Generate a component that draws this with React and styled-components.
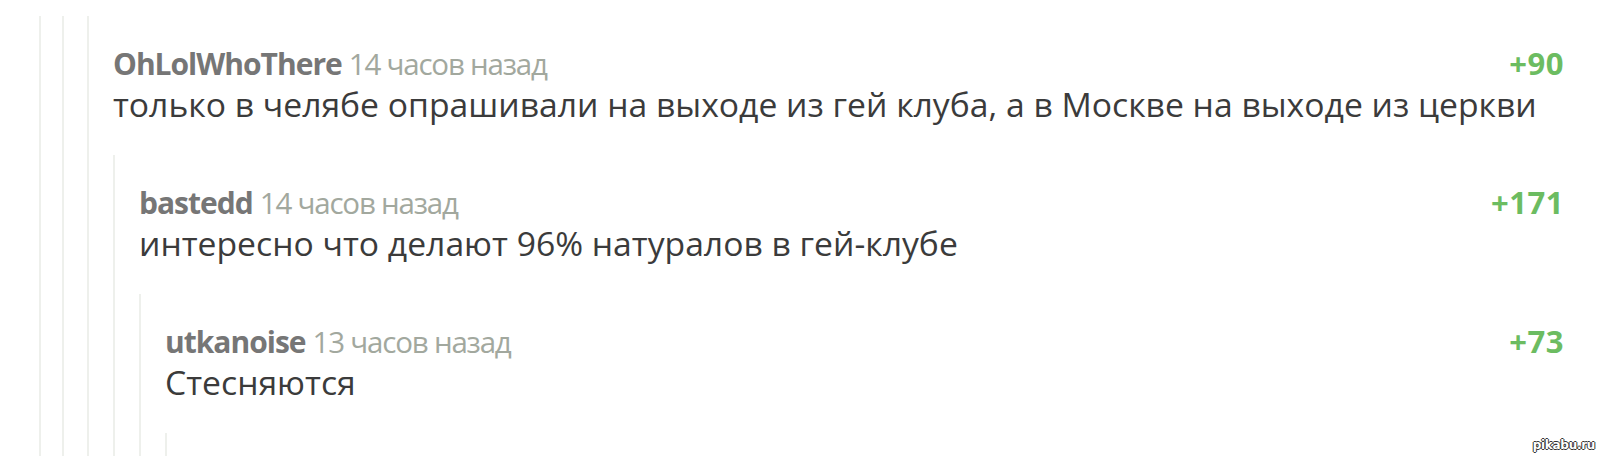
import React from "react";
import styled, { createGlobalStyle } from "styled-components";

const Global = createGlobalStyle`
  html, body {
    margin: 0;
    padding: 0;
    background: #ffffff;
  }
  body {
    font-family: "Open Sans", "Noto Sans", sans-serif;
    overflow: hidden;
  }
`;

const Page = styled.div`
  width: 1600px;
  height: 456px;
  overflow: hidden;
  box-sizing: border-box;
  padding: 0 36px 0 39px;
  position: relative;
`;

/* a vertical thread guide; parents above the viewport draw their lines full height */
const Thread = styled.div`
  border-left: 2px solid #eef0ec;
  padding-left: ${(p) => p.$indent}px;
  min-height: 456px;
  box-sizing: border-box;
`;

const Comment = styled.div`
  border-left: 2px solid #eef0ec;
  padding-left: 24px;
  padding-top: 27px;
  margin-top: ${(p) => p.$top}px;
  min-height: ${(p) => (p.$empty ? 40 : 0)}px;
`;

const Header = styled.div`
  display: flex;
  align-items: baseline;
  justify-content: space-between;
  font-size: 30px;
  line-height: 40px;
`;

const Meta = styled.div`
  display: flex;
  align-items: baseline;
  gap: 7px;
`;

const Author = styled.span`
  font-weight: 700;
  color: #767676;
  letter-spacing: -1px;
`;

const Time = styled.span`
  color: #a2a89e;
  font-weight: 400;
  font-size: 29.5px;
  letter-spacing: -1.2px;
`;

const Rating = styled.span`
  font-weight: 700;
  font-size: 31px;
  letter-spacing: 0.5px;
  color: #6cbc61;
`;

const Body = styled.div`
  font-size: 33.7px;
  line-height: 40px;
  color: #3b3b3b;
  white-space: nowrap;
`;

const Watermark = styled.div`
  position: absolute;
  right: 5px;
  bottom: 4px;
  font-family: "DejaVu Sans", sans-serif;
  font-size: 12px;
  font-weight: 700;
  color: #ffffff;
  letter-spacing: -0.3px;
  text-shadow: -1px 0 #333, 1px 0 #333, 0 -1px #333, 0 1px #333;
`;

const comments = [
  {
    author: "OhLolWhoThere",
    time: "14 часов назад",
    rating: "+90",
    text: "только в челябе опрашивали на выходе из гей клуба, а в Москве на выходе из церкви",
  },
  {
    author: "bastedd",
    time: "14 часов назад",
    rating: "+171",
    text: "интересно что делают 96% натуралов в гей-клубе",
  },
  {
    author: "utkanoise",
    time: "13 часов назад",
    rating: "+73",
    text: "Стесняются",
  },
];

function Node({ items, first }) {
  if (!items.length) {
    return <Comment $top={31} $empty />;
  }
  const [c, ...rest] = items;
  return (
    <Comment $top={first ? 16 : 31}>
      <Header>
        <Meta>
          <Author>{c.author}</Author>
          <Time>{c.time}</Time>
        </Meta>
        <Rating>{c.rating}</Rating>
      </Header>
      <Body>{c.text}</Body>
      <Node items={rest} />
    </Comment>
  );
}

export default function App() {
  return (
    <>
      <Global />
      <Page>
        <Thread $indent={21}>
          <Thread $indent={23}>
            <Node items={comments} first />
          </Thread>
        </Thread>
        <Watermark>pikabu.ru</Watermark>
      </Page>
    </>
  );
}
